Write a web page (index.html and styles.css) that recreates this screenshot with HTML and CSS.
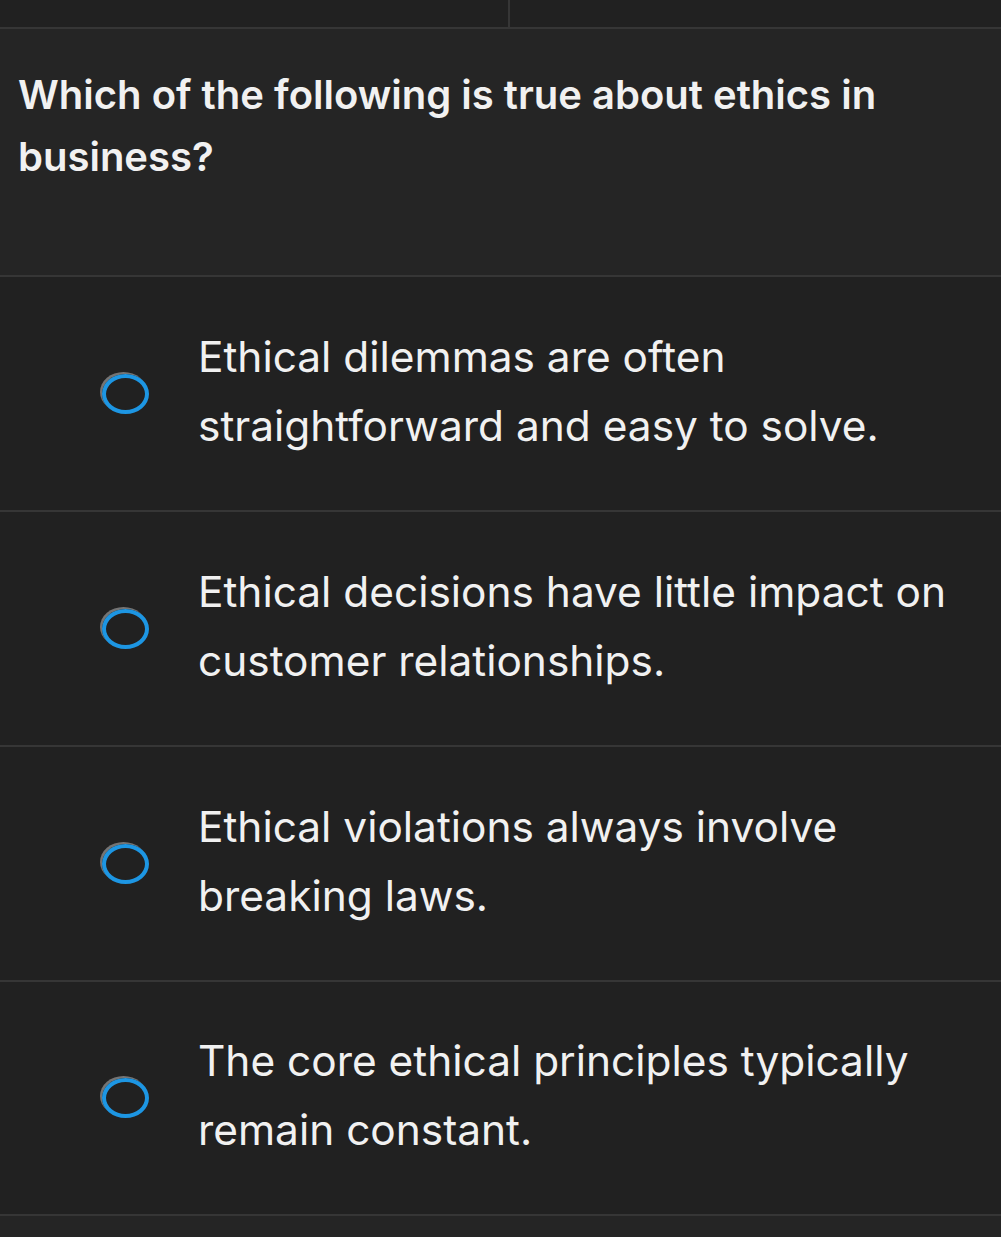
FILE: index.html
```html
<!DOCTYPE html>
<html>
<head>
<meta charset="utf-8">
<link rel="stylesheet" href="styles.css">
</head>
<body>
<div class="topbar">
  <div class="tab"></div>
  <div class="tab tab-right"></div>
</div>
<div class="question">Which of the following is true about ethics in business?</div>
<div class="options">
  <div class="option"><span class="radio"></span><span class="label">Ethical dilemmas are often straightforward and easy to solve.</span></div>
  <div class="option"><span class="radio"></span><span class="label">Ethical decisions have little impact on customer relationships.</span></div>
  <div class="option"><span class="radio"></span><span class="label">Ethical violations always involve breaking laws.</span></div>
  <div class="option option-last"><span class="radio"></span><span class="label">The core ethical principles typically remain constant.</span></div>
</div>
<div class="footer"></div>
</body>
</html>
```
FILE: styles.css
```css
html, body {
  margin: 0;
  padding: 0;
  background: #212121;
  font-family: Inter, "Open Sans", sans-serif;
  color: #f1f1f1;
}
.topbar {
  display: flex;
  height: 27px;
  background: #212121;
  border-bottom: 2px solid #363636;
}
.tab {
  width: 508px;
  border-right: 2px solid #363636;
}
.tab-right {
  flex: 1;
  border-right: none;
}
.question {
  background: #252525;
  height: 248px;
  box-sizing: border-box;
  padding: 35px 60px 0 18px;
  font-size: 40px;
  font-weight: 600;
  line-height: 62px;
  border-bottom: 2px solid #363636;
}
.option {
  display: flex;
  align-items: center;
  height: 233px;
  border-bottom: 2px solid #363636;
  padding-left: 102px;
  box-sizing: content-box;
}
.option-last {
  height: 232px;
}
.radio {
  flex: none;
  width: 39px;
  height: 32px;
  border: 4px solid #1d96e3;
  border-radius: 50%;
  box-shadow: -2px -2px 0 0 #747474;
  margin-right: 49px;
}
.label {
  font-size: 42.4px;
  line-height: 69px;
  padding-right: 40px;
  margin-bottom: 6px;
}
.footer {
  height: 22px;
  background: #252525;
}
```
